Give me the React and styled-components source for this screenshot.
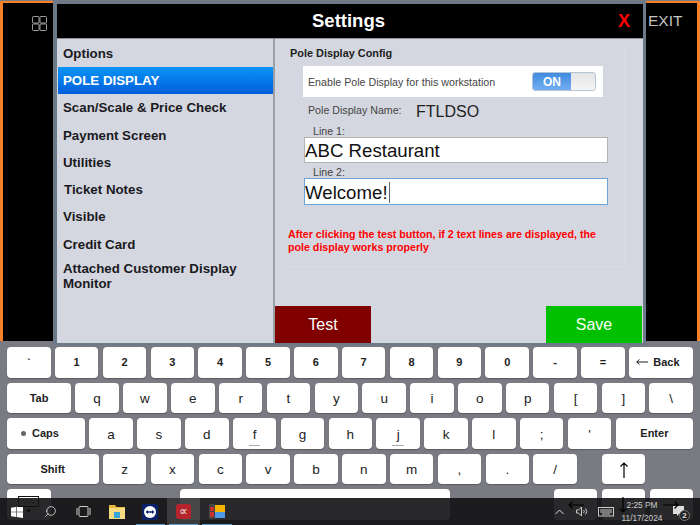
import React from "react";
import styled, { createGlobalStyle } from "styled-components";
import { Search } from "lucide-react";

const Global = createGlobalStyle`
  html, body {
    margin: 0;
    padding: 0;
    background: #797a82;
  }
  * {
    box-sizing: border-box;
  }
`;

const menuItems = [
  { label: "Options" },
  { label: "POLE DISPLAY", active: true },
  { label: "Scan/Scale & Price Check" },
  { label: "Payment Screen" },
  { label: "Utilities" },
  { label: "Ticket Notes", nudge: 1 },
  { label: "Visible" },
  { label: "Credit Card" },
];

const row1 = ["`", "1", "2", "3", "4", "5", "6", "7", "8", "9", "0", "-", "="];
const row2 = ["q", "w", "e", "r", "t", "y", "u", "i", "o", "p", "[", "]", "\\"];
const row3 = ["a", "s", "d", "f", "g", "h", "j", "k", "l", ";", "'"];
const row4 = ["z", "x", "c", "v", "b", "n", "m", ",", ".", "/"];

// thin long arrow, drawn pointing up and rotated for the other keys
const Arrow = ({ angle = 0, size = 16 }) => (
  <ArrowSvg $angle={angle} width={size} height={size} viewBox="0 0 16 16" fill="none" stroke="#000" strokeWidth="1.2">
    <path d="M8 16V1M4.500 4.500 8 1l3.500 3.500" />
  </ArrowSvg>
);

export default function App() {
  return (
    <Screen>
      <Global />
      <Top>
        <LeftStrip>
          <AppsIcon viewBox="0 0 16 16">
            <rect x="0.5" y="0.5" width="7" height="7" rx="1" />
            <rect x="8.500" y="0.5" width="7" height="7" rx="1" />
            <rect x="0.5" y="8.500" width="7" height="7" rx="1" />
            <rect x="8.500" y="8.500" width="7" height="7" rx="1" />
          </AppsIcon>
        </LeftStrip>
        <Modal>
          <Header>
            <Title>Settings</Title>
            <CloseX>X</CloseX>
          </Header>
          <ModalBody>
            <Sidebar>
              {menuItems.map((item) => (
                <MenuItem key={item.label} $active={item.active} $nudge={item.nudge}>
                  {item.label}
                </MenuItem>
              ))}
              <MenuItemTall>
                Attached Customer Display
                <br />
                Monitor
              </MenuItemTall>
            </Sidebar>
            <Content>
              <ConfigPanel>
                <PanelTitle>Pole Display Config</PanelTitle>
                <EnableRow>
                  <EnableLabel>Enable Pole Display for this workstation</EnableLabel>
                  <Toggle>
                    <ToggleOn>ON</ToggleOn>
                    <ToggleOff />
                  </Toggle>
                </EnableRow>
                <NameRow>
                  <NameLabel>Pole Display Name:</NameLabel>
                  <NameValue>FTLDSO</NameValue>
                </NameRow>
                <FieldLabel>Line 1:</FieldLabel>
                <Field>ABC Restaurant</Field>
                <FieldLabel>Line 2:</FieldLabel>
                <Field $focused>
                  Welcome!
                  <Caret />
                </Field>
                <Warning>
                  After clicking the test button, if 2 text lines are displayed, the
                  <br />
                  pole display works properly
                </Warning>
              </ConfigPanel>
              <Actions>
                <ActionButton $bg="#800000">Test</ActionButton>
                <ActionButton $bg="#00c000">Save</ActionButton>
              </Actions>
            </Content>
          </ModalBody>
        </Modal>
        <RightStrip>
          <Exit>EXIT</Exit>
        </RightStrip>
      </Top>
      <Keyboard>
        <KeyRow>
          {row1.map((k) => (
            <Key key={k} $bold>{k}</Key>
          ))}
          <BackKey $w={64} $bold>
            <BackArrow>
              <Arrow angle={-90} size={12} />
            </BackArrow>
            Back
          </BackKey>
        </KeyRow>
        <KeyRow>
          <Key $w={64} $bold>Tab</Key>
          {row2.map((k) => (
            <Key key={k}>{k}</Key>
          ))}
        </KeyRow>
        <KeyRow>
          <CapsKey $w={78} $bold>
            <CapsDot />
            Caps
          </CapsKey>
          {row3.map((k) => (
            <Key key={k} $home={k === "f" || k === "j"}>{k}</Key>
          ))}
          <Key $w={77.5} $bold>Enter</Key>
        </KeyRow>
        <KeyRow>
          <Key $w={91.5} $bold>Shift</Key>
          {row4.map((k) => (
            <Key key={k}>{k}</Key>
          ))}
          <KeyGap $w={16.3} />
          <Key><Arrow /></Key>
        </KeyRow>
        <KeyRow>
          <Key>
            <OverBar>
              <svg width="21" height="17" viewBox="0 0 21 17" fill="none" stroke="#111" strokeWidth="1">
                <rect x="0.5" y="0.5" width="20" height="10" />
                <path d="M5 4h1M9 4h1M13 4h1M7 7h1M11 7h1M15 7h1" />
                <path d="M8.500 14h4l-2 2.500z" fill="#111" />
              </svg>
            </OverBar>
          </Key>
          <KeyGap $w={120.7} />
          <Key $w={270} />
          <KeyGap $w={95.3} />
          <Key><Arrow angle={-90} /></Key>
          <Key><Arrow angle={180} /></Key>
          <Key><Arrow angle={90} /></Key>
        </KeyRow>
      </Keyboard>
      <Taskbar>
        <TaskIcons>
          <TaskCell>
            <svg width="12" height="12" viewBox="0 0 12 12" fill="#fff">
              <path d="M0 1.800 5 1v4.700H0zM5.600 .9 12 0v5.700H5.600zM0 6.300h5V11L0 10.200zM5.600 6.300H12V12l-6.400-.9z" />
            </svg>
          </TaskCell>
          <TaskCell>
            <FlippedSearch size={13} color="#ddd" strokeWidth={1.5} />
          </TaskCell>
          <TaskCell>
            <svg width="15" height="11" viewBox="0 0 15 11" fill="none" stroke="#ccc" strokeWidth="1">
              <rect x="3" y="0.5" width="9" height="10" rx="1" />
              <path d="M1 2v7M14 2v7" />
            </svg>
          </TaskCell>
          <TaskCell>
            <svg width="16" height="14" viewBox="0 0 16 14">
              <path d="M0 0h6l1.500 2H16v12H0z" fill="#e8b93f" />
              <rect x="0" y="3" width="16" height="11" fill="#f7dc82" />
              <rect x="5" y="7" width="6" height="6" fill="#3aa6d8" />
            </svg>
          </TaskCell>
          <TaskCell $open>
            <svg width="16" height="16" viewBox="0 0 16 16">
              <rect width="16" height="16" rx="2" fill="#0b2269" />
              <circle cx="8" cy="8" r="6" fill="#fff" />
              <path d="M3.500 8 6 6v1.300h4V6l2.500 2-2.500 2V8.700H6V10z" fill="#0b2269" />
            </svg>
          </TaskCell>
          <TaskCell $open $current>
            <AppBadge>∝</AppBadge>
          </TaskCell>
          <TaskCell $open>
            <svg width="16" height="15" viewBox="0 0 16 15">
              <rect x="0" y="0" width="6" height="15" rx="1" fill="#444" />
              <rect x="1" y="3" width="4" height="4" fill="#c8322c" />
              <rect x="1" y="8" width="4" height="5" fill="#c8322c" />
              <rect x="6" y="1" width="10" height="7" fill="#f4b400" />
              <rect x="6" y="8" width="10" height="6" fill="#4d9be6" />
            </svg>
          </TaskCell>
        </TaskIcons>
        <Tray>
          <TrayChevron width="9" height="6" viewBox="0 0 9 6" fill="none" stroke="#ddd" strokeWidth="1">
            <path d="M.5 5 4.500 1l4 4" />
          </TrayChevron>
          <svg width="12" height="11" viewBox="0 0 12 11" fill="none" stroke="#ccc" strokeWidth="1">
            <path d="M.5 4h2L5.500 1v9l-3-3h-2zM7.500 4a2 2 0 0 1 0 3M9.500 2.500a4.500 4.500 0 0 1 0 6" />
          </svg>
          <svg width="16" height="10" viewBox="0 0 16 10" fill="none" stroke="#ccc" strokeWidth="1">
            <rect x="0.5" y="0.500" width="15" height="8.500" />
            <path d="M2 3h12M2 5h12M4 7h8" />
          </svg>
          <Clock>
            <span>2:25 PM</span>
            <span>11/17/2024</span>
          </Clock>
          <Notify>
            <svg width="11" height="11" viewBox="0 0 11 11" fill="#ddd">
              <path d="M0 0h11v8H6L4 10V8H0z" />
            </svg>
            <NotifyCount>2</NotifyCount>
          </Notify>
        </Tray>
      </Taskbar>
    </Screen>
  );
}

const Screen = styled.div`
  width: 700px;
  height: 525px;
  position: relative;
  overflow: hidden;
  font-family: "Liberation Sans", Arial, sans-serif;
  background: #797a82;
`;
const Top = styled.div`
  height: 341px;
  padding-top: 1px;
  display: flex;
`;
const LeftStrip = styled.div`
  width: 53px;
  background: #000;
  border-left: 3px solid #f5822a;
  border-top: 2px solid #f5822a;
  display: flex;
  justify-content: flex-end;
  align-items: flex-start;
  padding: 13px 6px 0 0;
`;
const RightStrip = styled.div`
  width: 54px;
  background: #000;
  border-right: 3px solid #f5822a;
  border-top: 2px solid #f5822a;
  padding: 9px 0 0 2px;
`;
const AppsIcon = styled.svg`
  width: 15px;
  height: 15px;
  fill: none;
  stroke: #aaa;
  stroke-width: 1;
`;
const Exit = styled.div`
  color: #c4c4c4;
  font-size: 15.5px;
  line-height: 18px;
`;
const Modal = styled.div`
  width: 593px;
  height: 344px;
  position: relative;
  z-index: 1;
  background: #d4d7df;
  border: solid #6b7988;
  border-width: 3px 3px 2px 4px;
  display: flex;
  flex-direction: column;
`;
const Header = styled.div`
  height: 35px;
  flex: none;
  background: #000;
  border-bottom: 1px solid #8a8f98;
  display: grid;
  grid-template-columns: 1fr auto 1fr;
  align-items: center;
  padding: 0 3px 0 0;
`;
const Title = styled.div`
  grid-column: 2;
  color: #fff;
  font-size: 18.5px;
  font-weight: 700;
`;
const CloseX = styled.div`
  justify-self: end;
  margin-right: 10px;
  color: #f00;
  font-size: 18px;
  font-weight: 700;
`;
const ModalBody = styled.div`
  flex: 1;
  display: flex;
  min-height: 0;
`;
const Sidebar = styled.div`
  width: 218px;
  flex: none;
  padding: 0.5px 0 0 1px;
  border-right: 2px solid #9a9ea6;
`;
const MenuItem = styled.div`
  height: 27.3px;
  display: flex;
  align-items: center;
  padding-left: ${(p) => 5 + (p.$nudge || 0)}px;
  font-size: 13.3px;
  font-weight: 700;
  color: ${(p) => (p.$active ? "#fff" : "#1a1a1e")};
  background: ${(p) =>
    p.$active ? "linear-gradient(#0a94f6, #005fdc)" : "transparent"};
`;
const MenuItemTall = styled.div`
  padding: 3px 0 0 5px;
  font-size: 13.3px;
  line-height: 15px;
  font-weight: 700;
  color: #1a1a1e;
`;
const Content = styled.div`
  flex: 1;
  display: flex;
  flex-direction: column;
  min-width: 0;
`;
const ConfigPanel = styled.div`
  width: 341px;
  height: 220px;
  margin: 8px 0 0 9px;
  padding: 0 0 0 19px;
  border: 1px solid #d9dbe2;
  border-top: none;
  border-left: none;
  flex: none;
`;
const PanelTitle = styled.div`
  margin-left: -13px;
  height: 13px;
  font-size: 10.9px;
  line-height: 13px;
  font-weight: 700;
  color: #222;
`;
const EnableRow = styled.div`
  margin-top: 6px;
  width: 300px;
  height: 31px;
  background: #fff;
  display: flex;
  align-items: center;
  justify-content: space-between;
  padding: 0 7px 0 5px;
`;
const EnableLabel = styled.div`
  font-size: 10.67px;
  color: #444;
`;
const Toggle = styled.div`
  width: 64px;
  height: 19px;
  border-radius: 3px;
  overflow: hidden;
  display: flex;
  border: 1px solid #b5c3d6;
`;
const ToggleOn = styled.div`
  width: 38px;
  background: linear-gradient(#3f8be0, #75aef0);
  color: #fff;
  font-size: 12px;
  font-weight: 700;
  display: flex;
  align-items: center;
  justify-content: center;
`;
const ToggleOff = styled.div`
  flex: 1;
  background: linear-gradient(#e4e4e4, #f4f4f4);
`;
const NameRow = styled.div`
  margin: 3px 0 3px 5px;
  height: 20px;
  display: flex;
  align-items: center;
`;
const NameLabel = styled.div`
  width: 108px;
  font-size: 10.67px;
  color: #444;
`;
const NameValue = styled.div`
  font-size: 16px;
  color: #222;
  padding-top: 4px;
`;
const FieldLabel = styled.div`
  margin: 1px 0 0 10px;
  height: 14px;
  font-size: 10.67px;
  line-height: 14px;
  color: #444;
  padding-top: 1px;
`;
const Field = styled.div`
  width: 304px;
  height: ${(p) => (p.$focused ? 27 : 26)}px;
  margin-left: 1px;
  padding-top: 2px;
  background: #fff;
  border: 1px solid ${(p) => (p.$focused ? "#6aa6dc" : "#b4b4b4")};
  font-size: 18.67px;
  line-height: 24px;
  color: #111;
  display: flex;
  align-items: center;
`;
const Caret = styled.span`
  width: 1px;
  height: 21px;
  margin-left: 1px;
  background: #666;
`;
const Warning = styled.div`
  margin: 23px 0 0 -15px;
  width: 330px;
  font-size: 10.67px;
  line-height: 13.4px;
  font-weight: 700;
  color: #f00;
  white-space: nowrap;
`;
const Actions = styled.div`
  margin-top: auto;
  padding-right: 1px;
  display: flex;
  justify-content: space-between;
`;
const ActionButton = styled.div`
  width: 96px;
  height: 37px;
  background: ${(p) => p.$bg};
  color: #fff;
  font-size: 16px;
  display: flex;
  align-items: center;
  justify-content: center;
`;
const Keyboard = styled.div`
  padding: 6px 7px 0;
  display: flex;
  flex-direction: column;
  gap: 5px;
`;
const KeyRow = styled.div`
  display: flex;
  gap: 4.35px;
`;
const Key = styled.div`
  width: ${(p) => p.$w || 43.5}px;
  height: 30.5px;
  flex: none;
  position: relative;
  background: #fff;
  border-radius: 4px;
  box-shadow: 0 1px 1px rgba(0, 0, 0, 0.25);
  display: flex;
  align-items: center;
  justify-content: center;
  color: #222;
  font-size: ${(p) => (p.$bold ? 11 : 13.5)}px;
  font-weight: ${(p) => (p.$bold ? 700 : 400)};
  padding-top: ${(p) => (p.$bold ? 0 : 2)}px;
  white-space: pre;

  ${(p) =>
    p.$home &&
    `&::after {
      content: "";
      position: absolute;
      left: 16px;
      right: 16px;
      bottom: 3px;
      height: 1px;
      background: #aaa;
    }`}
`;
const BackKey = styled(Key)`
  padding-right: 6px;
`;
const CapsKey = styled(Key)`
  justify-content: flex-start;
  padding-left: 14px;
`;
const KeyGap = styled.div`
  width: ${(p) => p.$w}px;
  flex: none;
`;
const ArrowSvg = styled.svg`
  position: relative;
  z-index: 3;
  transform: rotate(${(p) => p.$angle}deg);
`;
const BackArrow = styled.span`
  display: flex;
  margin-right: 5px;
`;
const CapsDot = styled.span`
  width: 5px;
  height: 5px;
  border-radius: 50%;
  background: #666;
  margin-right: 6px;
`;
const OverBar = styled.span`
  position: relative;
  z-index: 3;
  top: -1px;
  display: flex;
`;
const Taskbar = styled.div`
  position: absolute;
  left: 0;
  right: 0;
  bottom: 0;
  height: 27px;
  z-index: 2;
  background: rgba(18, 18, 20, 0.9);
  display: flex;
  justify-content: space-between;
  align-items: stretch;
  padding-right: 16px;
`;
const TaskIcons = styled.div`
  display: flex;
`;
const TaskCell = styled.div`
  width: 33.4px;
  position: relative;
  display: flex;
  align-items: center;
  justify-content: center;
  background: ${(p) => (p.$current ? "rgba(255,255,255,0.14)" : "transparent")};

  ${(p) =>
    p.$open &&
    `&::after {
      content: "";
      position: absolute;
      left: 2px;
      right: 2px;
      bottom: 0;
      height: 1px;
      background: #5f9ecf;
    }`}
`;
const FlippedSearch = styled(Search)`
  transform: scaleX(-1);
`;
const AppBadge = styled.div`
  width: 15px;
  height: 15px;
  border-radius: 3px;
  background: #b5242a;
  color: #eee;
  font-family: "DejaVu Sans", sans-serif;
  font-size: 12px;
  line-height: 14px;
  text-align: center;
`;
const Tray = styled.div`
  display: flex;
  align-items: center;
  gap: 10px;
`;
const TrayChevron = styled.svg`
  margin-right: 2px;
`;
const Clock = styled.div`
  width: 42px;
  margin-left: -3px;
  display: flex;
  flex-direction: column;
  align-items: center;
  gap: 3px;
  font-size: 8.3px;
  line-height: 10px;
  color: #ccc;
  white-space: nowrap;
`;
const Notify = styled.div`
  position: relative;
  display: flex;
`;
const NotifyCount = styled.span`
  position: absolute;
  right: -6px;
  bottom: -4px;
  width: 11px;
  height: 11px;
  border-radius: 50%;
  border: 1px solid #777;
  background: #222;
  color: #ddd;
  font-size: 8px;
  font-weight: 700;
  line-height: 9px;
  text-align: center;
`;
